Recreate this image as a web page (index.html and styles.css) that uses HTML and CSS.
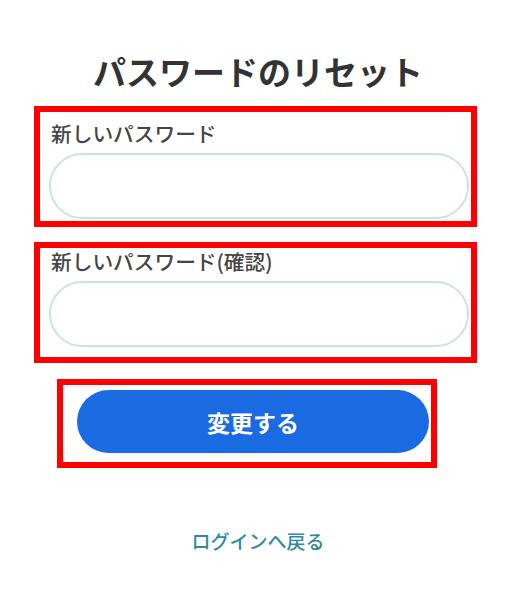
FILE: index.html
```html
<!DOCTYPE html>
<html lang="ja">
<head>
<meta charset="utf-8">
<title>パスワードのリセット</title>
<link rel="stylesheet" href="styles.css">
</head>
<body>
<main class="page">
  <h1 class="title">パスワードのリセット</h1>
  <form class="form">
    <div class="field field--first">
      <label class="field-label" for="pw1">新しいパスワード</label>
      <input class="field-input" id="pw1" type="password">
    </div>
    <div class="field field--second">
      <label class="field-label" for="pw2">新しいパスワード(確認)</label>
      <input class="field-input" id="pw2" type="password">
    </div>
    <div class="submit-wrap">
      <button class="submit" type="button">変更する</button>
    </div>
  </form>
  <a class="back-link" href="#">ログインへ戻る</a>
</main>
</body>
</html>
```
FILE: styles.css
```css
html, body {
  margin: 0;
  padding: 0;
  background: #ffffff;
}
body {
  font-family: "Noto Sans CJK JP", "Noto Sans", sans-serif;
}
.page {
  width: 448px;
  padding: 51px 0 0 34px;
  display: flex;
  flex-direction: column;
}
.title {
  margin: 0;
  font-size: 33px;
  line-height: 40px;
  font-weight: 700;
  color: #333333;
  text-align: center;
}
.form {
  display: flex;
  flex-direction: column;
  margin-top: 15px;
}
.field {
  box-sizing: border-box;
  width: 443px;
  height: 121px;
  border: 6px solid #ff0000;
  display: flex;
  flex-direction: column;
}
.field--first {
  padding-top: 9px;
}
.field--second {
  margin-top: 15px;
  padding-top: 1px;
}
.field-label {
  font-size: 20.7px;
  line-height: 24px;
  font-weight: 500;
  color: #454545;
  padding-left: 11px;
}
.field-input {
  box-sizing: border-box;
  margin: 8px 0 0 9px;
  width: 420px;
  height: 66px;
  border: 2px solid #c9e5d9;
  border-radius: 33px;
  background: #ffffff;
  outline: none;
  padding: 0 20px;
  font-size: 18px;
}
.submit-wrap {
  box-sizing: border-box;
  margin: 16px 0 0 23px;
  width: 380px;
  height: 89px;
  border: 6px solid #ff0000;
  padding: 5px 0 0 14px;
}
.submit {
  display: block;
  width: 352px;
  height: 63px;
  border: none;
  border-radius: 32px;
  background: #1a6be2;
  color: #ffffff;
  font-family: "Noto Sans CJK JP", "Noto Sans", sans-serif;
  font-size: 23px;
  font-weight: 700;
  padding: 0;
  cursor: pointer;
}
.back-link {
  margin-top: 61px;
  align-self: center;
  font-size: 19px;
  line-height: 24px;
  font-weight: 500;
  color: #2f8ba0;
  text-decoration: none;
}
```
